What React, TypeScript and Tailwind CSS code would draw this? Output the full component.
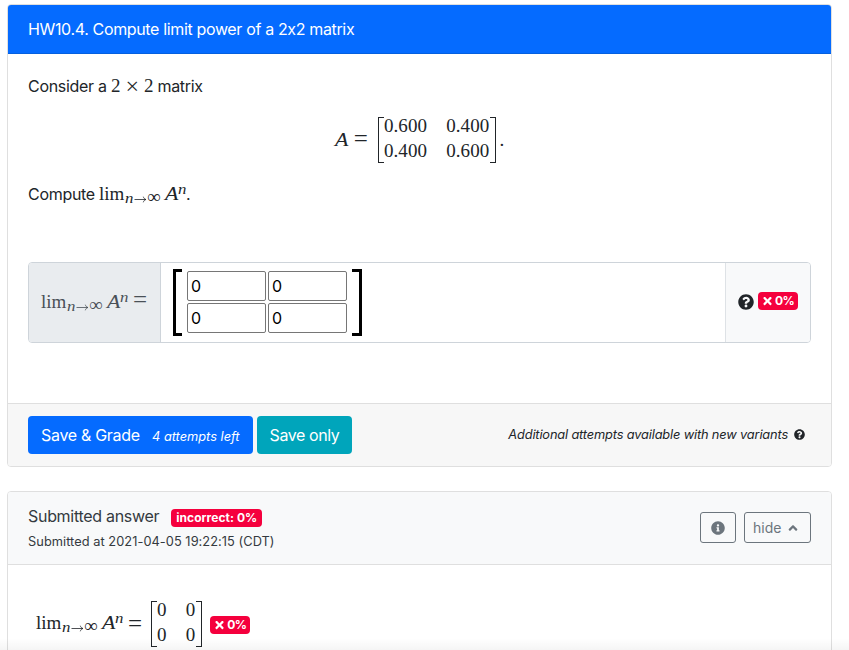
import type { ReactNode } from 'react'
import { FaAngleUp, FaInfoCircle, FaQuestionCircle, FaTimes } from 'react-icons/fa'

function Limit() {
  return (
    <span className="inline-flex items-baseline whitespace-nowrap font-['Liberation_Serif',serif] text-[19px] leading-none tracking-normal">
      <span className="w-[26px]">lim</span>
      <span className="relative top-[3px] inline-flex w-[36px] items-baseline text-[14px]">
        <span className="w-[9px] origin-left scale-x-120 italic">n</span>
        <svg className="mb-px h-[7px] w-[13px]" viewBox="0 0 13 7" fill="none" stroke="currentColor" strokeWidth="0.8">
          <path d="M0.5 3.5H12M9.3 0.7C9.7 2.2 10.6 3.1 12 3.5C10.6 3.9 9.7 4.8 9.3 6.3" />
        </svg>
        <span className="w-[14px] text-[19px]">∞</span>
      </span>
      <span className="ml-[4px] w-[13px] origin-left scale-x-115 italic">A</span>
      <span className="relative -top-[6px] w-[9px] origin-left scale-x-120 text-[14px] italic">n</span>
    </span>
  )
}

function Equals() {
  return <span className="font-['Liberation_Serif',serif] text-[25px] leading-[20px]">=</span>
}

function Matrix({ rows }: { rows: string[][] }) {
  return (
    <div className="flex h-[46px] items-stretch font-['Liberation_Serif',serif] text-[19px]">
      <div className="w-[6px] border-y border-l border-[#212529]" />
      <div className="-mt-[4px] mr-px">
        {rows.map((row, i) => (
          <div key={i} className="flex h-[25px] items-center gap-[19px] leading-none">
            {row.map((value, j) => (
              <span key={j} className="tracking-[0.1px]">{value}</span>
            ))}
          </div>
        ))}
      </div>
      <div className="w-[6px] border-y border-r border-[#212529]" />
    </div>
  )
}

function Badge({ children }: { children: ReactNode }) {
  return (
    <span className="inline-flex h-[18px] items-center rounded bg-[#f5003d] px-[5px] text-[12px] font-bold leading-none text-white">
      {children}
    </span>
  )
}

function ScoreBadge() {
  return (
    <Badge>
      <FaTimes className="mr-[3px] h-3 w-[9px]" />
      <span className="w-[18px] tracking-[-0.6px]">0%</span>
    </Badge>
  )
}

export default function App() {
  return (
    <div className="relative h-[650px] w-[849px] overflow-hidden bg-white pt-1 pl-[7px] font-[Inter,sans-serif] text-base text-[#212529]">
      <div className="flex h-[463px] w-[825px] flex-col overflow-hidden rounded border border-[#dfdfdf]">
        <div className="flex h-[49px] shrink-0 items-center border-b border-[#0560df] bg-[#056bff] px-5 tracking-[-0.35px] text-white">
          HW10.4. Compute limit power of a 2x2 matrix
        </div>

        <div className="h-[349px] shrink-0 px-5 pt-5">
          <p className="flex h-6 items-center whitespace-pre tracking-[-0.3px]">
            Consider a{' '}
            <span className="mr-1 flex items-center font-['Liberation_Serif',serif] text-[19px] tracking-normal">
              2<span className="mx-[5px] text-[24px] leading-5">×</span>2
            </span>
            matrix
          </p>

          <div className="mt-[19px] flex h-[46px] justify-center">
            <span className="mt-[11px] mr-[5px] w-[14px] origin-left scale-x-115 font-['Liberation_Serif',serif] text-[19px] leading-[24px] italic">A</span>
            <div className="mt-[12px] mr-[10px]">
              <Equals />
            </div>
            <Matrix rows={[['0.600', '0.400'], ['0.400', '0.600']]} />
            <span className="mt-[11px] ml-[3px] font-['Liberation_Serif',serif] text-[19px] leading-[24px]">.</span>
          </div>

          <p className="mt-[19px] flex h-6 items-baseline whitespace-pre tracking-[-0.3px]">
            Compute <Limit />
            <span className="-ml-px">.</span>
          </p>

          <div className="mt-[56px] flex h-[81px] overflow-hidden rounded border border-[#ced4da]">
            <div className="flex w-[132px] items-center gap-[4px] border-r border-[#ced4da] bg-[#e9ecef] pb-[3px] pl-3 text-[#495057]">
              <Limit />
              <div className="mt-0.5">
                <Equals />
              </div>
            </div>
            <div className="flex flex-1 items-center gap-[5px] pl-3">
              <div className="h-[67px] w-[9px] border-y-[3px] border-l-[3px] border-black" />
              <div className="-mt-0.5 grid grid-cols-[79px_79px] gap-0.5">
                {[0, 1, 2, 3].map((i) => (
                  <input
                    key={i}
                    defaultValue="0"
                    className="h-[30px] w-[79px] rounded-[2px] border border-[#767676] bg-white px-[3px] text-black"
                  />
                ))}
              </div>
              <div className="h-[67px] w-[10px] border-y-[3px] border-r-[3px] border-black" />
            </div>
            <div className="flex w-[85px] items-center gap-1 border-l border-[#dee2e6] bg-[#f8f9fa] pb-[3px] pl-3">
              <FaQuestionCircle className="mt-px size-4" />
              <ScoreBadge />
            </div>
          </div>
        </div>

        <div className="flex flex-1 items-center justify-between border-t border-[#dfdfdf] bg-[#f7f7f7] pr-[26px] pl-5">
          <div className="flex gap-1 text-white">
            <button className="flex h-[38px] w-[225px] items-baseline rounded bg-[#056bff] pt-[7px] pl-[13px] whitespace-nowrap">
              <span className="w-[111px] text-left tracking-[-0.3px]">Save &amp; Grade</span>
              <span className="text-[12.8px] italic">4 attempts left</span>
            </button>
            <button className="h-[38px] w-[95px] rounded bg-[#00a5bb] tracking-[-0.4px] whitespace-nowrap">Save only</button>
          </div>
          <div className="flex items-center gap-[6px] text-[12.8px] tracking-[-0.15px] italic">
            Additional attempts available with new variants
            <FaQuestionCircle className="mb-px size-[11px]" />
          </div>
        </div>
      </div>

      <div className="mt-6 h-[240px] w-[825px] overflow-hidden rounded border border-[#dfdfdf]">
        <div className="flex h-[73px] items-center justify-between border-b border-[#dfdfdf] bg-[#f8f9fa] px-5 text-[#343a40]">
          <div>
            <div className="flex h-6 items-center gap-3">
              <span className="tracking-[-0.3px]">Submitted answer</span>
              <span className="mt-[3px] flex tracking-[0.05px]">
                <Badge>incorrect: 0%</Badge>
              </span>
            </div>
            <div className="h-6 pt-[2px] text-[12.8px] leading-6 tracking-[0.05px]">Submitted at 2021-04-05 19:22:15 (CDT)</div>
          </div>
          <div className="-mt-px flex gap-2 text-sm text-[#6c757d]">
            <button className="flex h-[31px] w-9 items-center justify-center rounded-[3px] border border-[#6c757d]">
              <FaInfoCircle className="size-[14px]" />
            </button>
            <button className="flex h-[31px] w-[67px] items-center gap-[5px] rounded-[3px] border border-[#6c757d] pl-2">
              hide
              <FaAngleUp className="size-[14px]" />
            </button>
          </div>
        </div>
        <div className="flex pt-[36px] pl-[28px]">
          <div className="mt-[10px]">
            <Limit />
          </div>
          <div className="mt-[13px] mr-[9px] ml-[4px]">
            <Equals />
          </div>
          <Matrix rows={[['0', '0'], ['0', '0']]} />
          <div className="mt-[12px] ml-[8px]">
            <ScoreBadge />
          </div>
        </div>
      </div>
      <div className="pointer-events-none absolute inset-x-0 bottom-0 h-3 bg-linear-to-b from-transparent to-black/4" />
    </div>
  )
}
